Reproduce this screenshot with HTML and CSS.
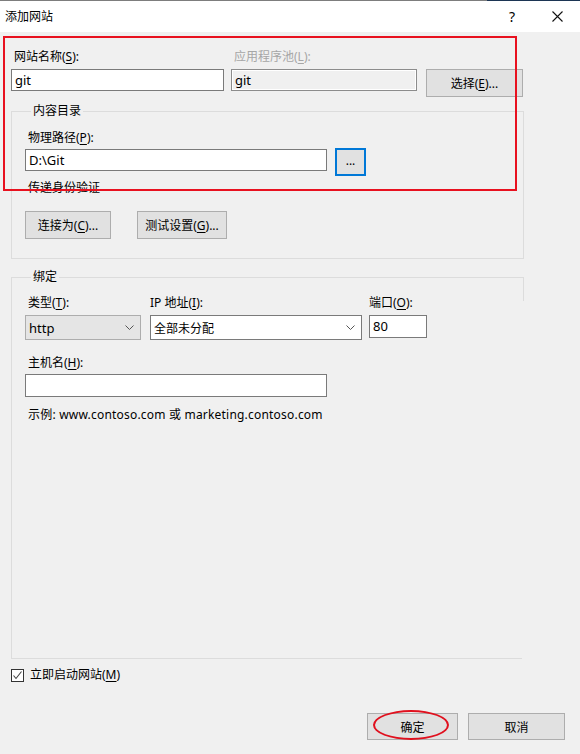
FILE: index.html
```html
<!DOCTYPE html>
<html lang="zh-CN">
<head>
<meta charset="utf-8">
<title>添加网站</title>
<link rel="stylesheet" href="styles.css">
</head>
<body>
<div class="window">
  <div class="topline"></div>
  <div class="titlebar">
    <span class="title">添加网站</span>
    <span class="help">?</span>
    <span class="close"><svg width="11" height="11" viewBox="0 0 11 11"><path d="M0.5 0.5 L10.5 10.5 M10.5 0.5 L0.5 10.5" stroke="#111" stroke-width="1.1" fill="none"/></svg></span>
  </div>
  <div class="content">
    <div class="row1">
      <div class="col col-name">
        <div class="label">网站名称(<u>S</u>):</div>
        <div class="input w-name">git</div>
      </div>
      <div class="col col-pool">
        <div class="label disabled">应用程序池(<u>L</u>):</div>
        <div class="input input-disabled w-pool">git</div>
      </div>
      <div class="btn btn-select">选择(<u>E</u>)...</div>
    </div>

    <fieldset class="group group-content">
      <legend>内容目录</legend>
      <div class="label first">物理路径(<u>P</u>):</div>
      <div class="path-row">
        <div class="input w-path">D:\Git</div>
        <div class="btn btn-browse">...</div>
      </div>
      <div class="label auth">传递身份验证</div>
      <div class="btn-row">
        <div class="btn btn-connect">连接为(<u>C</u>)...</div>
        <div class="btn btn-test">测试设置(<u>G</u>)...</div>
      </div>
    </fieldset>

    <fieldset class="group group-binding">
      <legend>绑定</legend>
      <div class="bind-row">
        <div class="col">
          <div class="label">类型(<u>T</u>):</div>
          <div class="select select-gray w-type">http<svg class="chev" width="9" height="5" viewBox="0 0 9 5"><path d="M0.5 0.5 L4.5 4.5 L8.5 0.5" stroke="#555" stroke-width="1" fill="none"/></svg></div>
        </div>
        <div class="col col-ip">
          <div class="label flush">IP 地址(<u>I</u>):</div>
          <div class="select w-ip">全部未分配<svg class="chev" width="9" height="5" viewBox="0 0 9 5"><path d="M0.5 0.5 L4.5 4.5 L8.5 0.5" stroke="#555" stroke-width="1" fill="none"/></svg></div>
        </div>
        <div class="col col-port">
          <div class="label flush">端口(<u>O</u>):</div>
          <div class="input w-port">80</div>
        </div>
      </div>
      <div class="label host">主机名(<u>H</u>):</div>
      <div class="input w-host"></div>
      <div class="label example">示例: www.contoso.com 或 marketing.contoso.com</div>
    </fieldset>

    <div class="check-row">
      <span class="checkbox"><svg width="11" height="11" viewBox="0 0 11 11"><path d="M1.5 5.5 L4 8.5 L9.5 1.5" stroke="#444" stroke-width="1.1" fill="none"/></svg></span>
      <span class="check-label">立即启动网站(<u>M</u>)</span>
    </div>

    <div class="footer">
      <div class="btn btn-ok">确定</div>
      <div class="btn btn-cancel">取消</div>
    </div>
  </div>
  <div class="mark-rect"></div>
  <div class="mark-ellipse"></div>
</div>
</body>
</html>
```

FILE: styles.css
```css
* { box-sizing: border-box; }
html, body { margin: 0; padding: 0; }
body {
  font-family: "Noto Sans", "Noto Sans CJK SC", sans-serif;
  font-size: 12px;
  color: #000;
  background: #f0f0f0;
}
u { text-decoration-thickness: 1px; text-underline-offset: 2px; }

.window {
  position: relative;
  width: 580px;
  height: 754px;
  background: #f0f0f0;
  overflow: hidden;
}
.topline {
  height: 1px;
  background: linear-gradient(to right, #7d7d7d 487px, #1c3553 487px);
}
.titlebar {
  height: 31px;
  background: #fff;
  display: flex;
  align-items: center;
  padding-left: 5px;
}
.title { line-height: 16px; }
.help {
  margin-left: auto;
  font-size: 14px;
  line-height: 16px;
  margin-right: 37px;
}
.close { width: 11px; height: 11px; margin-right: 17px; display: flex; }

.content { padding-left: 11px; display: flex; flex-direction: column; }

.label { height: 16px; line-height: 16px; padding-left: 3px; white-space: nowrap; }
.label.flush { padding-left: 0; }
.label.disabled { color: #a6a6a6; }

.row1 { display: flex; align-items: flex-start; margin-top: 17px; }
.col { display: flex; flex-direction: column; }
.col .label { margin-bottom: 4px; }
.col-pool { margin-left: 7px; }

.input {
  height: 22px;
  line-height: 20px;
  border: 1px solid #7a7a7a;
  background: #fff;
  padding-left: 3px;
  font-size: 13px;
  white-space: nowrap;
}
.input-disabled {
  background: #f0f0f0;
  border-color: #8c8c8c;
  box-shadow: inset 0 0 0 1px #fff;
}
.w-name { width: 213px; }
.w-pool { width: 186px; }
.w-path { width: 302px; }
.w-port { width: 58px; height: 23px; line-height: 21px; }
.w-host { width: 302px; height: 23px; }

.btn {
  height: 28px;
  background: #e1e1e1;
  border: 1px solid #adadad;
  display: flex;
  align-items: center;
  justify-content: center;
  white-space: nowrap;
}
.btn-select { width: 97px; margin-top: 20px; margin-left: 9px; }

.group {
  margin: 0;
  padding: 0 0 0 13px;
  border: 1px solid #dcdcdc;
  width: 513px;
  min-inline-size: 0;
}
.group legend {
  padding: 0 2px;
  margin-left: 6px;
  line-height: 16px;
  height: 16px;
}
.group-content { margin-top: 6px; padding-bottom: 19px; }
.group-content .first { margin-top: 11px; margin-bottom: 2px; }
.path-row { display: flex; align-items: flex-start; }
.path-row .input { margin-top: 1px; }
.btn-browse {
  width: 31px;
  margin-left: 8px;
  border: 2px solid #0078d7;
  padding-bottom: 4px;
}
.label.auth { margin-top: 4px; }
.btn-row { display: flex; margin-top: 15px; }
.btn-connect { width: 86px; }
.btn-test { width: 90px; margin-left: 26px; }

.group-binding {
  position: relative;
  margin-top: 10px;
  height: 390px;
}
.group-binding::after {
  content: "";
  position: absolute;
  right: -1px;
  top: 16px;
  width: 2px;
  height: 360px;
  background: #f0f0f0;
}
.bind-row { display: flex; margin-top: 10px; align-items: flex-start; }
.col-ip { margin-left: 9px; }
.col-port { margin-left: 7px; }

.select {
  height: 25px;
  border: 1px solid #7a7a7a;
  background: #fff;
  display: flex;
  align-items: center;
  padding-left: 3px;
  padding-right: 6px;
  white-space: nowrap;
}
.select-gray { background: #e5e5e5; border-color: #adadad; font-size: 13px; }
.select .chev { margin-left: auto; }
.w-type { width: 116px; }
.w-ip { width: 212px; }

.label.host { margin-top: 15px; margin-bottom: 3px; }
.label.example { margin-top: 10px; letter-spacing: 0.2px; }

.check-row { display: flex; align-items: center; margin-top: 9px; height: 14px; }
.checkbox {
  width: 13px;
  height: 13px;
  border: 1px solid #333;
  background: #fff;
  display: flex;
  align-items: center;
  justify-content: center;
}
.check-label { margin-left: 6px; line-height: 16px; }

.footer { display: flex; justify-content: flex-end; margin-top: 31px; padding-right: 15px; }
.btn-ok { width: 91px; height: 27px; }
.btn-cancel { width: 97px; height: 27px; margin-left: 10px; }

.mark-rect {
  position: absolute;
  left: 3px;
  top: 36px;
  width: 514px;
  height: 155px;
  border: 2px solid #e8111f;
  pointer-events: none;
}
.mark-ellipse {
  position: absolute;
  left: 373px;
  top: 710px;
  width: 76px;
  height: 30px;
  border: 2px solid #e0101e;
  border-radius: 50%;
  pointer-events: none;
}
```
